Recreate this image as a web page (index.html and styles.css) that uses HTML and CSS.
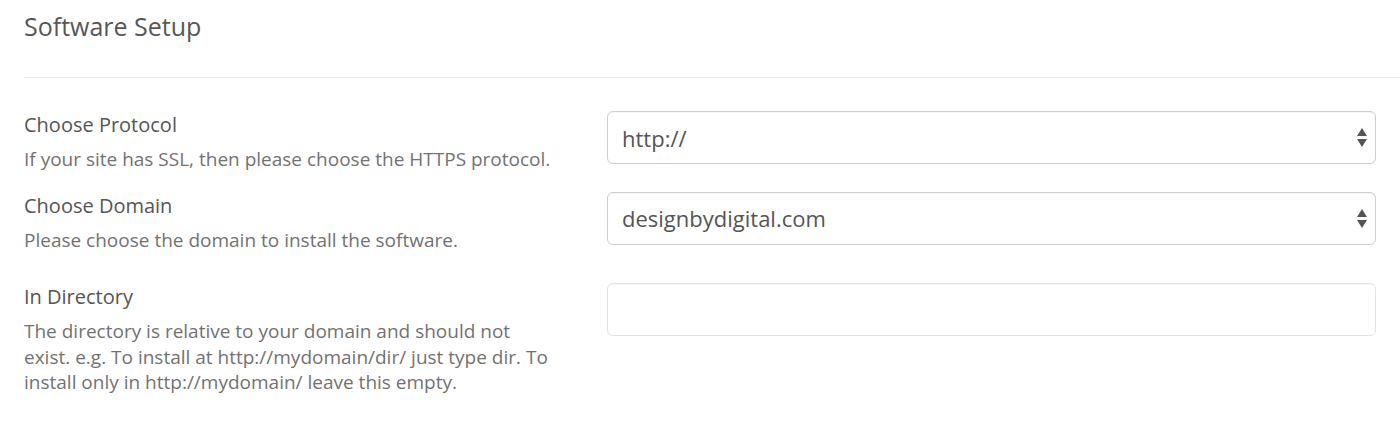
FILE: index.html
```html
<!DOCTYPE html>
<html>
<head>
<meta charset="utf-8">
<link rel="stylesheet" href="styles.css">
</head>
<body>
<div class="page">
  <h2 class="title">Software Setup</h2>
  <hr class="divider">
  <div class="form-row">
    <div class="info">
      <div class="label">Choose Protocol</div>
      <div class="help">If your site has SSL, then please choose the HTTPS protocol.</div>
    </div>
    <div class="control">
      <div class="select"><span>http://</span>
        <svg class="arrows" width="10" height="19" viewBox="0 0 10 19"><path d="M5 0 L10 8 L0 8 Z M0 11 L10 11 L5 19 Z" fill="#555"/></svg>
      </div>
    </div>
  </div>
  <div class="form-row">
    <div class="info">
      <div class="label">Choose Domain</div>
      <div class="help">Please choose the domain to install the software.</div>
    </div>
    <div class="control">
      <div class="select"><span>designbydigital.com</span>
        <svg class="arrows" width="10" height="19" viewBox="0 0 10 19"><path d="M5 0 L10 8 L0 8 Z M0 11 L10 11 L5 19 Z" fill="#555"/></svg>
      </div>
    </div>
  </div>
  <div class="form-row form-row-spaced">
    <div class="info">
      <div class="label">In Directory</div>
      <div class="help">The directory is relative to your domain and should not exist. e.g. To install at http://mydomain/dir/ just type dir. To install only in http://mydomain/ leave this empty.</div>
    </div>
    <div class="control">
      <div class="input"></div>
    </div>
  </div>
</div>
</body>
</html>
```

FILE: styles.css
```css
html, body {
  margin: 0;
  padding: 0;
  background: #fff;
}
body {
  font-family: "Open Sans", "Liberation Sans", sans-serif;
  color: #555;
}
.page {
  padding: 8px 24px 0 24px;
}
.title {
  font-size: 25px;
  font-weight: 400;
  color: #575757;
  margin: 0;
  line-height: 36px;
}
.divider {
  border: 0;
  border-top: 1px solid #e6e6e6;
  margin: 33px -24px 33px 0;
}
.form-row {
  display: grid;
  grid-template-columns: 560px 1fr;
  column-gap: 23px;
  margin-bottom: 19px;
}
.form-row-spaced {
  margin-top: 30px;
}
.label {
  font-size: 20px;
  line-height: 27px;
  color: #555;
}
.help {
  font-size: 19px;
  line-height: 25.5px;
  color: #727272;
  margin-top: 9px;
  width: 530px;
}
.select, .input {
  box-sizing: border-box;
  height: 53px;
  border: 1px solid #cdcdcd;
  border-radius: 6px;
  background: #fff;
  display: flex;
  align-items: center;
  padding: 0 8px 0 14px;
  font-size: 22px;
  color: #555;
  box-shadow: inset 0 1px 1px rgba(0,0,0,0.04);
}
.select span {
  flex: 1;
}
.input {
  border-color: #e2e2e2;
}
```
